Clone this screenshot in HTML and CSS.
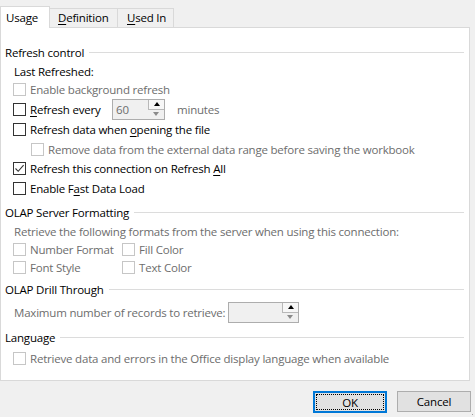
FILE: index.html
```html
<!DOCTYPE html>
<html>
<head>
<meta charset="utf-8">
<link rel="stylesheet" href="styles.css">
</head>
<body>
<div class="tabs">
  <div class="tab active">Usa<u>g</u>e</div>
  <div class="tab"><u>D</u>efinition</div>
  <div class="tab"><u>U</u>sed In</div>
</div>
<div class="panel">
  <div class="hdr h1"><span>Refresh control</span><i class="rule"></i></div>
  <div class="row r-last">Last Refreshed:</div>
  <div class="row r-bg dis"><span class="cb off"></span><span>Enable background refresh</span></div>
  <div class="row r-every">
    <span class="cb"></span><span class="lbl-every"><u>R</u>efresh every</span>
    <div class="spin s60"><span class="spin-val">60</span><div class="spin-btns"><span class="up"><i class="arr-up"></i></span><span class="down"><i class="arr-down"></i></span></div></div>
    <span class="dis min">minutes</span>
  </div>
  <div class="row r-std"><span class="cb"></span><span>Refresh data when <u>o</u>pening the file</span></div>
  <div class="row r-std dis sub"><span class="cb off"></span><span>Remove data from the external data range before saving the workbook</span></div>
  <div class="row r-std"><span class="cb chk"><svg width="11" height="11" viewBox="0 0 11 11"><path d="M1.5 5.5 L4.2 8.3 L9.6 2.2" fill="none" stroke="#333" stroke-width="1.1"/></svg></span><span>Refresh this connection on Refresh <u>A</u>ll</span></div>
  <div class="row r-std"><span class="cb"></span><span>Enable F<u>a</u>st Data Load</span></div>

  <div class="hdr h2"><span>OLAP Server Formatting</span><i class="rule"></i></div>
  <div class="row r-ret dis">Retrieve the following formats from the server when using this connection:</div>
  <div class="row r-num dis">
    <div class="pair"><span class="cb off"></span><span>Number Format</span></div>
    <div class="pair"><span class="cb off"></span><span>Fill Color</span></div>
  </div>
  <div class="row r-font dis">
    <div class="pair"><span class="cb off"></span><span>Font Style</span></div>
    <div class="pair"><span class="cb off"></span><span>Text Color</span></div>
  </div>

  <div class="hdr h3"><span>OLAP Drill Through</span><i class="rule"></i></div>
  <div class="row r-max">
    <span class="dis lbl-max">Maximum number of records to retrieve:</span>
    <div class="spin smax"><span class="spin-val"></span><div class="spin-btns"><span class="up"><i class="arr-up"></i></span><span class="down"><i class="arr-down"></i></span></div></div>
  </div>

  <div class="hdr h4"><span>Language</span><i class="rule"></i></div>
  <div class="row r-lang dis"><span class="cb off"></span><span>Retrieve data and errors in the Office display language when available</span></div>
</div>
<div class="buttons">
  <div class="btn default"><span class="focus">OK</span></div>
  <div class="btn">Cancel</div>
</div>
<div class="grip"></div>
</body>
</html>
```
FILE: styles.css
```css
html, body {
  margin: 0;
  padding: 0;
}
body {
  width: 475px;
  height: 417px;
  background: #f0f0f0;
  font-family: "Segoe UI", "Open Sans", "Noto Sans", sans-serif;
  font-size: 11.5px;
  letter-spacing: -0.2px;
  color: #000;
  position: relative;
  overflow: hidden;
}
u { text-decoration: underline; text-underline-offset: 2px; }

.tabs {
  display: flex;
  align-items: flex-end;
  height: 27px;
  position: relative;
  z-index: 2;
}
.tab {
  box-sizing: border-box;
  height: 19px;
  line-height: 18px;
  white-space: nowrap;
  border: 1px solid #d9d9d9;
  border-left: none;
  border-bottom: none;
  background: #f0f0f0;
  padding: 0 8px;
}
.tab:nth-child(2) { width: 68px; }
.tab:nth-child(3) { width: 56px; padding-left: 9px; }
.tab.active {
  width: 50px;
  height: 22px;
  line-height: 22px;
  margin-bottom: -1px;
  background: #fff;
  border-left: 1px solid #d9d9d9;
  padding: 0 5px;
}

.panel {
  box-sizing: border-box;
  width: 470px;
  height: 354px;
  background: #fff;
  border: 1px solid #d9d9d9;
  padding: 14px 5px 0 4px;
  display: flex;
  flex-direction: column;
}

.hdr {
  display: flex;
  align-items: center;
  height: 20px;
  gap: 5px;
}
.hdr .rule {
  flex: 1;
  height: 1px;
  background: #dcdcdc;
  margin-top: 1px;
}
.h2 { margin-top: 4px; }
.h3 { margin-top: 2px; }
.h4 { margin-top: 2px; }

.row {
  display: flex;
  align-items: center;
  padding-left: 8px;
  gap: 4px;
  height: 19.5px;
  white-space: nowrap;
}
.r-last { height: 19px; padding-left: 9px; }
.r-bg { height: 17px; }
.r-every { height: 22px; }
.r-ret { height: 19px; padding-left: 9px; }
.r-num { height: 17px; }
.r-font { height: 19px; }
.r-max { height: 26px; }
.r-lang { height: 22px; }
.sub { padding-left: 26px; }

.dis { color: #6d6d6d; }

.cb {
  box-sizing: border-box;
  width: 13px;
  height: 13px;
  border: 1px solid #333;
  background: #fff;
  flex: none;
  display: flex;
  align-items: center;
  justify-content: center;
}
.cb.off { border-color: #c6c6c6; }

.pair {
  display: flex;
  align-items: center;
  gap: 4px;
  width: 105px;
}

.lbl-every { width: 78px; }
.spin {
  box-sizing: border-box;
  height: 21px;
  border: 1px solid #adadad;
  background: #f0f0f0;
  display: flex;
  position: relative;
  flex: none;
}
.s60 { width: 53px; }
.smax { width: 71px; }
.lbl-max { width: 210px; padding-left: 1px; }
.spin-val {
  flex: 1;
  color: #6d6d6d;
  padding-left: 3px;
  line-height: 19px;
}
.spin-btns {
  width: 16px;
  display: flex;
  flex-direction: column;
}
.spin-btns .up {
  box-sizing: border-box;
  height: 10px;
  border: 1px solid #b8b8b8;
  border-top: none;
  border-right: none;
  background: #f7f7f7;
  display: flex;
  align-items: center;
  justify-content: center;
}
.spin-btns .down {
  height: 9px;
  background: #f0f0f0;
  display: flex;
  align-items: center;
  justify-content: center;
}
.arr-up {
  width: 0; height: 0;
  border-left: 3.5px solid transparent;
  border-right: 3.5px solid transparent;
  border-bottom: 4px solid #000;
}
.arr-down {
  width: 0; height: 0;
  border-left: 3.5px solid transparent;
  border-right: 3.5px solid transparent;
  border-top: 4px solid #8a8a8a;
}
.min { margin-left: 8px; }

.buttons {
  display: flex;
  justify-content: flex-end;
  gap: 10px;
  margin-top: 10px;
  padding-right: 4px;
}
.btn {
  box-sizing: border-box;
  width: 74px;
  height: 21px;
  background: #e1e1e1;
  border: 1px solid #adadad;
  display: flex;
  align-items: center;
  justify-content: center;
}
.btn.default {
  height: 22px;
  border: 2px solid #0078d7;
  padding: 1px;
}
.btn .focus {
  box-sizing: border-box;
  width: 100%;
  height: 100%;
  border: 1px dotted #000;
  display: flex;
  align-items: center;
  justify-content: center;
}
.grip {
  position: absolute;
  right: 1px;
  bottom: 1px;
  width: 3px;
  height: 3px;
  background: radial-gradient(circle, #a0a0a0 40%, transparent 45%);
}
```
